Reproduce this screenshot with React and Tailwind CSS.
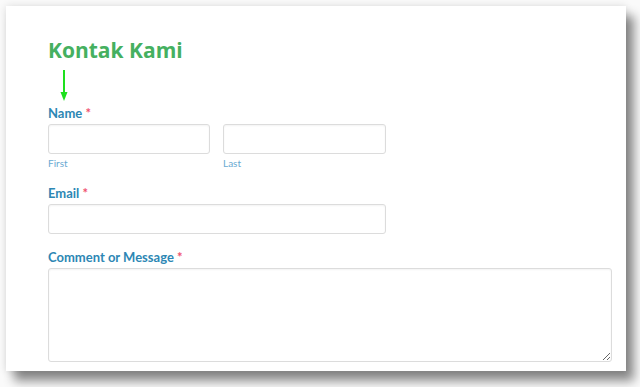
export default function App() {
  const label = "block font-['Lato','Open_Sans',sans-serif] text-[13px] leading-[16px] font-bold text-[#2d87b4]";
  const sub = "block font-['Lato','Open_Sans',sans-serif] text-[10px] leading-[12px] text-[#6aaad2]";
  const field = "block h-[30px] rounded-[3px] border border-[#dcdcdc] bg-white shadow-[inset_0_1px_2px_rgba(0,0,0,0.05)] outline-none";

  return (
    <div className="w-[640px] h-[387px] bg-[#fafafa] pt-[6px] pl-[6px] overflow-hidden">
      <div className="w-[620px] h-[365px] bg-white pl-[42px] pt-[31px] shadow-[0_0_8px_rgba(0,0,0,0.12),8px_10px_10px_rgba(0,0,0,0.45)]">
        <h1 className="font-['Open_Sans','Liberation_Sans',sans-serif] text-[21px] leading-[26px] font-bold text-[#45b060]">
          Kontak Kami
        </h1>

        {/* annotation arrow */}
        <svg className="block mt-[7px] ml-[12px]" width="8" height="31" viewBox="0 0 8 31">
          <line x1="4" y1="0" x2="4" y2="24" stroke="#1ee01e" strokeWidth="2" />
          <polygon points="0.5,22 7.5,22 4,31" fill="#1ee01e" />
        </svg>

        <label className={`${label} mt-[4px]`}>
          Name <span className="text-[#f0506e]">*</span>
        </label>
        <div className="flex gap-[13px] mt-[3px]">
          <div>
            <input className={`${field} w-[162px]`} />
            <span className={`${sub} mt-[3px]`}>First</span>
          </div>
          <div>
            <input className={`${field} w-[163px]`} />
            <span className={`${sub} mt-[3px]`}>Last</span>
          </div>
        </div>

        <label className={`${label} mt-[16px]`}>
          Email <span className="text-[#f0506e]">*</span>
        </label>
        <input className={`${field} w-[338px] mt-[3px]`} />

        <label className={`${label} mt-[15px]`}>
          Comment or Message <span className="text-[#f0506e]">*</span>
        </label>
        <textarea className="block w-[564px] h-[94px] mt-[3px] rounded-[3px] border border-[#dcdcdc] bg-white shadow-[inset_0_1px_2px_rgba(0,0,0,0.05)] outline-none resize" />
      </div>
    </div>
  );
}
